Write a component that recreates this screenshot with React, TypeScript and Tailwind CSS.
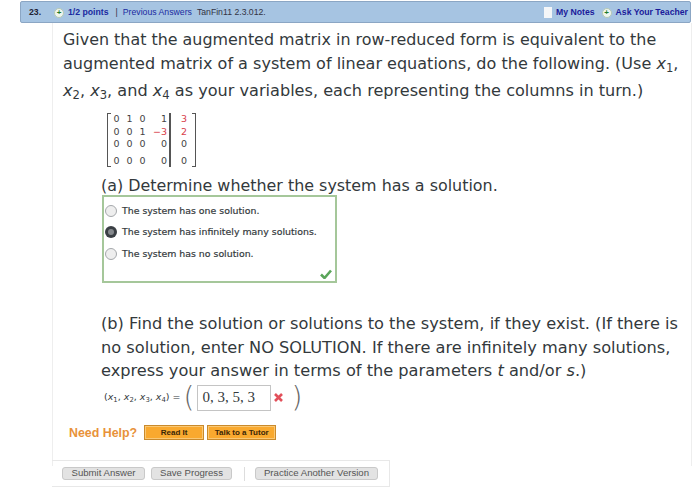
const dv = "font-['DejaVu_Sans',sans-serif]";
const ar = "font-['Liberation_Sans',sans-serif]";

function Plus() {
  return (
    <span className="flex h-[10px] w-[10px] items-center justify-center rounded-full border border-[#b5c9b5] bg-[#eef5ee]">
      <span className="text-[8px] font-bold leading-none text-[#1d7a2a]">+</span>
    </span>
  );
}

function X({ n }: { n: string }) {
  return (
    <span>
      <i>x</i>
      <sub className="text-[0.72em] not-italic">{n}</sub>
    </span>
  );
}

function Radio({ on, label }: { on?: boolean; label: string }) {
  return (
    <div className="flex h-[21.5px] items-center gap-[5px]">
      <span
        className={
          on
            ? "flex h-[12px] w-[12px] items-center justify-center rounded-full bg-[#3a3f44]"
            : "h-[12px] w-[12px] rounded-full border border-[#a5a8ab] bg-[#eeeeee]"
        }
      >
        {on && <span className="h-[6px] w-[6px] rounded-full bg-[#85898d]" />}
      </span>
      <span className="text-[9.4px] font-medium text-[#33393c] [-webkit-text-stroke:0.2px_#33393c]">{label}</span>
    </div>
  );
}

function Matrix() {
  const rows = [
    ["0", "1", "0", "1", "3"],
    ["0", "0", "1", "−3", "2"],
    ["0", "0", "0", "0", "0"],
    ["0", "0", "0", "0", "0"],
  ];
  return (
    <div className="ml-[44px] mt-[10px] flex h-[54px] w-[89px] text-[9.5px] leading-[12.5px] text-[#444]">
      <div className="w-[4px] border-y border-l border-[#555]" />
      <div className="flex w-[60px] flex-col border-r-2 border-[#555] pr-[2px]">
        {rows.map((r, i) => (
          <div key={i} className={i === 3 ? "-ml-[1px] mt-[4px] flex" : "-ml-[1px] flex"}>
            <span className="w-[13px] text-center">{r[0]}</span>
            <span className="w-[13px] text-center">{r[1]}</span>
            <span className="w-[13px] text-center">{r[2]}</span>
            <span className={r[3] === "−3" ? "w-[18px] text-right text-[#d8404a]" : "w-[18px] text-right"}>{r[3]}</span>
          </div>
        ))}
      </div>
      <div className="flex w-[21px] flex-col pl-[5px] text-center">
        {rows.map((r, i) => (
          <span key={i} className={(i < 2 ? "text-[#d8404a]" : "") + (i === 3 ? " mt-[4px]" : "")}>
            {r[4]}
          </span>
        ))}
      </div>
      <div className="w-[4px] border-y border-r border-[#555]" />
    </div>
  );
}

function Orange({ w, label }: { w: string; label: string }) {
  return (
    <span className={`flex h-[15px] ${w} items-center justify-center border border-[#c98a2c] bg-[#f9a92f] text-[8px] font-bold text-[#3a2608] shadow-[inset_0_0_0_1px_#fbc874] ${ar}`}>
      {label}
    </span>
  );
}

function Btn({ w, label }: { w: string; label: string }) {
  return (
    <span className={`flex h-[13px] ${w} items-center justify-center rounded-[3px] border border-[#c9c9c9] bg-[#e3e3e3] text-[9.6px] text-[#555] ${ar}`}>
      {label}
    </span>
  );
}

export default function App() {
  return (
    <div className="h-[489px] w-[700px] overflow-hidden bg-white pt-px">
      <div className={`ml-[20px] flex h-[22px] w-[671px] items-center rounded-[2px] border border-[#8ba6c4] bg-[#a6c4e2] pt-[1px] text-[8.7px] ${ar}`}>
        <span className="ml-[8px] w-[25px] font-bold text-[#223]">23.</span>
        <Plus />
        <span className="ml-[4px] font-bold text-[#1a2aa0]">1/2 points</span>
        <span className="ml-[7px] text-[#334]">|</span>
        <span className="ml-[5px] text-[#1a2aa0]">Previous Answers</span>
        <span className="ml-[5px] text-[#334]">TanFin11 2.3.012.</span>
        <span className="ml-auto h-[11px] w-[8px] bg-[#f4f6f8]" />
        <span className="ml-[4px] font-bold text-[#1a1a9a]">My Notes</span>
        <span className="ml-[7px]">
          <Plus />
        </span>
        <span className="ml-[4px] mr-[2px] font-bold text-[#1a1a9a]">Ask Your Teacher</span>
      </div>

      <div className={`ml-[52px] h-[443px] w-[640px] border-x border-[#eeeeee] pl-[10px] text-[#33393c] ${dv}`}>
        <div className="pt-[5px] leading-[24px]">
          <p className="whitespace-nowrap text-[15.92px]">Given that the augmented matrix in row-reduced form is equivalent to the</p>
          <p className="whitespace-nowrap text-[16.05px]">augmented matrix of a system of linear equations, do the following. (Use <X n="1" />,</p>
          <p className="mt-[3px] whitespace-nowrap text-[16.11px]">
            <X n="2" />, <X n="3" />, and <X n="4" /> as your variables, each representing the columns in turn.)
          </p>
        </div>

        <Matrix />

        <p className="ml-[38px] mt-[7px] text-[15.92px] leading-[24px]">(a) Determine whether the system has a solution.</p>

        <div className="relative ml-[39px] mt-[-3px] h-[88px] w-[235px] border-2 border-[#a5c79a] pl-[1px] pt-[3px]">
          <Radio label="The system has one solution." />
          <Radio on label="The system has infinitely many solutions." />
          <Radio label="The system has no solution." />
          <svg className="absolute bottom-[2px] right-[3px]" width="12" height="10" viewBox="0 0 12 10">
            <path d="M1 5.5 L4.5 9 L11 1.5" fill="none" stroke="#5aa55a" strokeWidth="2.6" />
          </svg>
        </div>

        <div className="ml-[38px] mt-[29px] text-[16.2px] leading-[23.5px]">
          <p className="whitespace-nowrap">(b) Find the solution or solutions to the system, if they exist. (If there is</p>
          <p className="whitespace-nowrap">no solution, enter NO SOLUTION. If there are infinitely many solutions,</p>
          <p className="whitespace-nowrap">express your answer in terms of the parameters <i>t</i> and/or <i>s</i>.)</p>
        </div>

        <div className="ml-[38px] mt-[1px] flex h-[28px] items-center">
          <span className="ml-[3px] text-[9.5px]">
            (<X n="1" />, <X n="2" />, <X n="3" />, <X n="4" />) =
          </span>
          <span className="ml-[3px] text-[28px] font-thin leading-none text-[#666]">(</span>
          <span className="ml-[3px] flex h-[26px] w-[74px] items-center border border-[#c4c4c4] pl-[4px] font-['Liberation_Serif',serif] text-[15px]">
            0, 3, 5, 3
          </span>
          <svg className="ml-[3px]" width="9" height="9" viewBox="0 0 9 9">
            <path d="M1 1 L8 8 M8 1 L1 8" stroke="#e2505a" strokeWidth="2.6" />
          </svg>
          <span className="ml-[8px] text-[28px] font-thin leading-none text-[#666]">)</span>
        </div>

        <div className="mt-[12px] flex items-center">
          <span className={`ml-[6px] text-[12.4px] font-bold text-[#e8923a] ${ar}`}>Need Help?</span>
          <span className="ml-[7px]"><Orange w="w-[60px]" label="Read It" /></span>
          <span className="ml-[3px]"><Orange w="w-[69px]" label="Talk to a Tutor" /></span>
        </div>

        <div className="-ml-[11px] mt-[18px] flex h-[27px] w-[338px] items-center border-y border-r border-[#e8e8e8] pl-[10px]">
          <Btn w="w-[83px]" label="Submit Answer" />
          <span className="ml-[6px]"><Btn w="w-[81px]" label="Save Progress" /></span>
          <span className="ml-[12px] mr-[10px] h-[14px] w-px bg-[#ddd]" />
          <Btn w="w-[123px]" label="Practice Another Version" />
        </div>
      </div>
    </div>
  );
}
